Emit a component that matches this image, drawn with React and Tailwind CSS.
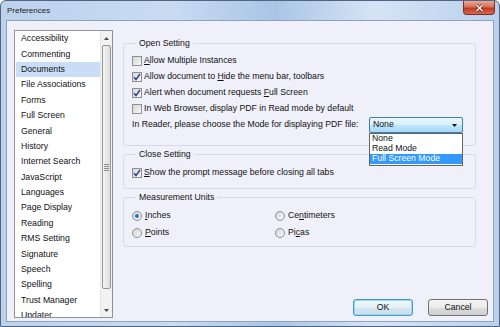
import React from "react";

const items = [
  "Accessibility",
  "Commenting",
  "Documents",
  "File Associations",
  "Forms",
  "Full Screen",
  "General",
  "History",
  "Internet Search",
  "JavaScript",
  "Languages",
  "Page Display",
  "Reading",
  "RMS Setting",
  "Signature",
  "Speech",
  "Spelling",
  "Trust Manager",
  "Updater",
];

const CheckBox = ({ checked }) => (
  <span className="flex h-[10px] w-[10px] shrink-0 items-center justify-center border border-[#8e8f8f] bg-[linear-gradient(135deg,#d4d4d4,#fafafa)]">
    {checked && (
      <svg width="8" height="8" viewBox="0 0 8 8">
        <path d="M1 4.2 L3 6.6 L7 1" fill="none" stroke="#2b3f8f" strokeWidth="1.5" />
      </svg>
    )}
  </span>
);

const Radio = ({ checked }) => (
  <span className="flex h-[10px] w-[10px] shrink-0 items-center justify-center rounded-full border border-[#8e8f8f] bg-[linear-gradient(135deg,#d4d4d4,#fafafa)]">
    {checked && <span className="h-[4px] w-[4px] rounded-full bg-[#2f74c8]" />}
  </span>
);

const Group = ({ title, className = "", children }) => (
  <fieldset className={`w-[353px] rounded-[3px] border border-[#d6dae8] ${className}`}>
    <legend className="ml-[4px] px-[3px] leading-[11px]">{title}</legend>
    {children}
  </fieldset>
);

const CheckRow = ({ checked, children }) => (
  <div className="flex h-[16px] items-center gap-[2px]">
    <CheckBox checked={checked} />
    <span>{children}</span>
  </div>
);

const RadioRow = ({ checked, children }) => (
  <div className="flex h-[17px] items-center gap-[3px]">
    <Radio checked={checked} />
    <span>{children}</span>
  </div>
);

export default function App() {
  return (
    <div className="flex h-[327px] w-[500px] flex-col rounded-t-[6px] border border-[#4f6582] bg-[linear-gradient(90deg,#bcd2ec,#c8dbf1_35%,#a9c5e6_55%,#d5e4f5_75%,#b9d0ec)] font-['Liberation_Sans',Arial,sans-serif] text-[8.7px] text-[#111]">
      {/* Title bar */}
      <div className="flex h-[19px] items-start">
        <span className="pl-[6px] pt-[4px] text-[8px] text-[#1b1b1b]">Preferences</span>
        <div className="ml-auto mr-[4px] flex h-[14px] w-[32px] items-center justify-center rounded-b-[4px] border border-t-0 border-[#7a3024] bg-[linear-gradient(180deg,#e9a999,#d4715b_45%,#c2391f_55%,#d9664b)]">
          <svg width="9" height="8" viewBox="0 0 9 8">
            <path d="M1.5 1 L7.5 7 M7.5 1 L1.5 7" stroke="#5a1a10" strokeWidth="2.6" />
            <path d="M1.5 1 L7.5 7 M7.5 1 L1.5 7" stroke="#ffffff" strokeWidth="1.5" />
          </svg>
        </div>
      </div>

      {/* Client */}
      <div className="mx-[5px] mb-[4px] flex flex-1 items-start border border-[#8fa3bf] bg-[#eff0f9] pl-[7px] pr-[5px]">
        {/* Category list */}
        <div className="mt-[9px] flex h-[288px] w-[99px] shrink-0 border border-[#8d939c] bg-white">
          <div className="flex-1 overflow-hidden">
            {items.map((item) => (
              <div
                key={item}
                className={`ml-[1px] flex h-[15.4px] items-center pl-[5px] ${
                  item === "Documents" ? "bg-[#c9ddf6]" : ""
                }`}
              >
                {item}
              </div>
            ))}
          </div>
          <div className="flex w-[12px] flex-col border-l border-[#e8e8e8] bg-[#f2f2f2]">
            <div className="flex h-[14px] items-center justify-center">
              <svg width="5" height="3" viewBox="0 0 5 3">
                <path d="M0 3 L2.5 0 L5 3 Z" fill="#4a4a4a" />
              </svg>
            </div>
            <div className="mx-[1px] flex h-[244px] flex-col items-center justify-center gap-[1px] rounded-[2px] border border-[#979797] bg-[linear-gradient(90deg,#f4f4f4,#dcdcdc)]">
              <span className="h-px w-[5px] bg-[#8a8a8a]" />
              <span className="h-px w-[5px] bg-[#8a8a8a]" />
              <span className="h-px w-[5px] bg-[#8a8a8a]" />
              <span className="h-px w-[5px] bg-[#8a8a8a]" />
            </div>
            <div className="mt-auto flex h-[13px] items-center justify-center">
              <svg width="5" height="3" viewBox="0 0 5 3">
                <path d="M0 0 L2.5 3 L5 0 Z" fill="#4a4a4a" />
              </svg>
            </div>
          </div>
        </div>

        {/* Settings pane */}
        <div className="ml-[10px] flex flex-1 flex-col self-stretch pb-[5px] pt-[17px]">
          <Group title="Open Setting" className="pb-[12px] pl-[8px] pr-[12px] pt-[4px]">
            <CheckRow checked={false}>
              <u>A</u>llow Multiple Instances
            </CheckRow>
            <CheckRow checked>
              Allow document to <u>H</u>ide the menu bar, toolbars
            </CheckRow>
            <CheckRow checked>
              Alert when document requests <u>F</u>ull Screen
            </CheckRow>
            <CheckRow checked={false}>
              In Web Browser, display PDF in Read mode by default
            </CheckRow>
            <div className="flex h-[16px] items-center justify-between">
              <span>In Reader, please choose the Mode for displaying PDF file:</span>
              <div className="relative w-[94px]">
                <div className="flex h-[16px] items-center justify-between rounded-[2px] border border-[#3c7fb1] bg-[linear-gradient(180deg,#eaf6fd,#d9f0fc_50%,#bee6fd_51%,#a7d9f5)] pl-[3px] pr-[5px]">
                  <span>None</span>
                  <svg width="5" height="3" viewBox="0 0 5 3">
                    <path d="M0 0 L2.5 3 L5 0 Z" fill="#111" />
                  </svg>
                </div>
                <div className="absolute left-0 top-full z-10 w-full border border-[#646464] bg-white pb-px">
                  <div className="flex h-[10px] items-center pl-[2px]">None</div>
                  <div className="flex h-[10px] items-center pl-[2px]">Read Mode</div>
                  <div className="flex h-[10px] items-center bg-[#3399ff] pl-[2px] text-white">
                    Full Screen Mode
                  </div>
                </div>
              </div>
            </div>
          </Group>

          <Group title="Close Setting" className="mt-[3px] pb-[7px] pl-[8px] pt-[5px]">
            <CheckRow checked>
              <u>S</u>how the prompt message before closing all tabs
            </CheckRow>
          </Group>

          <Group title="Measurement Units" className="mt-[3px] pb-[5px] pl-[8px] pt-[4px]">
            <div className="grid grid-cols-[143px_1fr]">
              <RadioRow checked>
                <u>I</u>nches
              </RadioRow>
              <RadioRow checked={false}>
                Ce<u>n</u>timeters
              </RadioRow>
              <RadioRow checked={false}>
                <u>P</u>oints
              </RadioRow>
              <RadioRow checked={false}>
                Pi<u>c</u>as
              </RadioRow>
            </div>
          </Group>

          <div className="mt-auto flex justify-end gap-[15px]">
            <button className="flex h-[17px] w-[60px] items-center justify-center rounded-[3px] border border-[#3d9ac9] bg-[linear-gradient(180deg,#f2f8fc,#e4eff6_50%,#d3e5f0_51%,#c9dfec)] shadow-[inset_0_0_0_1px_#9fd6f0]">
              OK
            </button>
            <button className="flex h-[17px] w-[60px] items-center justify-center rounded-[3px] border border-[#707070] bg-[linear-gradient(180deg,#f2f2f2,#ebebeb_50%,#dddddd_51%,#cfcfcf)]">
              Cancel
            </button>
          </div>
        </div>
      </div>
    </div>
  );
}
